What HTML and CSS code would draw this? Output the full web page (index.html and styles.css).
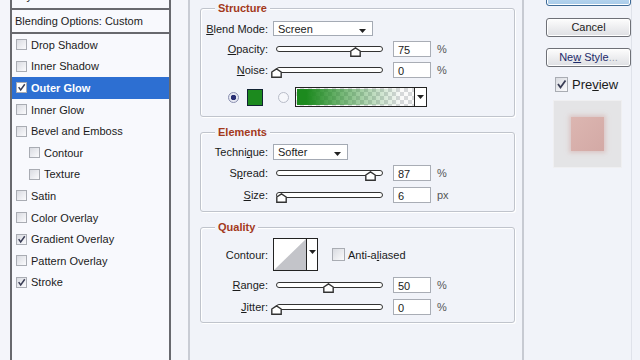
FILE: index.html
```html
<!DOCTYPE html>
<html lang="en">
<head>
    <meta charset="UTF-8">
    <title>Layer Style</title>
    <link rel="stylesheet" href="styles.css">
</head>
<body>
<div class="dialog">

    <div class="sidebar">
        <div class="style-list">
            <div class="list-title">Styles</div>
            <div class="list-head">Blending Options: Custom</div>
            <div class="item"><span class="cb"></span>Drop Shadow</div>
            <div class="item"><span class="cb"></span>Inner Shadow</div>
            <div class="item selected"><span class="cb"><svg viewBox="0 0 11 11"><path d="M2 5 L4.5 8.5 L9.5 1.5"/></svg></span>Outer Glow</div>
            <div class="item"><span class="cb"></span>Inner Glow</div>
            <div class="item"><span class="cb"></span>Bevel and Emboss</div>
            <div class="item sub"><span class="cb"></span>Contour</div>
            <div class="item sub"><span class="cb"></span>Texture</div>
            <div class="item"><span class="cb"></span>Satin</div>
            <div class="item"><span class="cb"></span>Color Overlay</div>
            <div class="item"><span class="cb"><svg viewBox="0 0 11 11"><path d="M2 5 L4.5 8.5 L9.5 1.5"/></svg></span>Gradient Overlay</div>
            <div class="item"><span class="cb"></span>Pattern Overlay</div>
            <div class="item"><span class="cb"><svg viewBox="0 0 11 11"><path d="M2 5 L4.5 8.5 L9.5 1.5"/></svg></span>Stroke</div>
        </div>
    </div>

    <div class="main">
        <!-- Structure -->
        <div class="group g-structure">
            <div class="group-title">Structure</div>
            <div class="row r-blend">
                <span class="label"><u>B</u>lend Mode:</span>
                <div class="select sel-blend">Screen<svg class="arrow" viewBox="0 0 7 4"><path d="M0 0 H7 L3.5 4 Z"/></svg></div>
            </div>
            <div class="row r-gap5">
                <span class="label"><u>O</u>pacity:</span>
                <div class="slider"><div class="track"></div><svg class="thumb" style="left:74%" viewBox="0 0 11 10"><path d="M5.5 0.8 L10.2 4 L10.2 9.2 L0.8 9.2 L0.8 4 Z"/></svg></div>
                <div class="num">75</div><span class="unit">%</span>
            </div>
            <div class="row r-gap5">
                <span class="label"><u>N</u>oise:</span>
                <div class="slider"><div class="track"></div><svg class="thumb" style="left:0%" viewBox="0 0 11 10"><path d="M5.5 0.8 L10.2 4 L10.2 9.2 L0.8 9.2 L0.8 4 Z"/></svg></div>
                <div class="num">0</div><span class="unit">%</span>
            </div>
            <div class="row r-color">
                <span class="radio on"></span>
                <span class="swatch"></span>
                <span class="radio"></span>
                <div class="gradient"><span class="grad-fill"></span><span class="grad-drop"><svg class="arrow" viewBox="0 0 7 4"><path d="M0 0 H7 L3.5 4 Z"/></svg></span></div>
            </div>
        </div>

        <!-- Elements -->
        <div class="group g-elements">
            <div class="group-title">Elements</div>
            <div class="row r-tech">
                <span class="label">Techni<u>q</u>ue:</span>
                <div class="select sel-tech">Softer<svg class="arrow" viewBox="0 0 7 4"><path d="M0 0 H7 L3.5 4 Z"/></svg></div>
            </div>
            <div class="row r-gap5">
                <span class="label">S<u>p</u>read:</span>
                <div class="slider"><div class="track"></div><svg class="thumb" style="left:88%" viewBox="0 0 11 10"><path d="M5.5 0.8 L10.2 4 L10.2 9.2 L0.8 9.2 L0.8 4 Z"/></svg></div>
                <div class="num">87</div><span class="unit">%</span>
            </div>
            <div class="row r-gap6">
                <span class="label"><u>S</u>ize:</span>
                <div class="slider"><div class="track"></div><svg class="thumb" style="left:5.6%" viewBox="0 0 11 10"><path d="M5.5 0.8 L10.2 4 L10.2 9.2 L0.8 9.2 L0.8 4 Z"/></svg></div>
                <div class="num">6</div><span class="unit">px</span>
            </div>
        </div>

        <!-- Quality -->
        <div class="group g-quality">
            <div class="group-title">Quality</div>
            <div class="row r-contour">
                <span class="label">Contour:</span>
                <div class="contour">
                    <svg class="curve" viewBox="0 0 32 31"><path d="M0 31 L32 0 L32 31 Z"/></svg>
                    <span class="contour-drop"><svg class="arrow" viewBox="0 0 7 4"><path d="M0 0 H7 L3.5 4 Z"/></svg></span>
                </div>
                <span class="cb aa"></span><span class="aa-text">Anti-a<u>l</u>iased</span>
            </div>
            <div class="row r-gap6">
                <span class="label"><u>R</u>ange:</span>
                <div class="slider"><div class="track"></div><svg class="thumb" style="left:48.6%" viewBox="0 0 11 10"><path d="M5.5 0.8 L10.2 4 L10.2 9.2 L0.8 9.2 L0.8 4 Z"/></svg></div>
                <div class="num">50</div><span class="unit">%</span>
            </div>
            <div class="row r-gap6">
                <span class="label"><u>J</u>itter:</span>
                <div class="slider"><div class="track"></div><svg class="thumb" style="left:0%" viewBox="0 0 11 10"><path d="M5.5 0.8 L10.2 4 L10.2 9.2 L0.8 9.2 L0.8 4 Z"/></svg></div>
                <div class="num">0</div><span class="unit">%</span>
            </div>
        </div>
    </div>

    <div class="actions">
        <div class="btn btn-ok">OK</div>
        <div class="btn btn-cancel">Cancel</div>
        <div class="btn btn-new">Ne<u>w</u> Style<span class="dots">...</span></div>
        <div class="preview-check">
            <span class="cb big"><svg viewBox="0 0 11 11"><path d="M2 5 L4.5 8.5 L9.5 1.5"/></svg></span>
            <span>Pre<u>v</u>iew</span>
        </div>
        <div class="preview-box"><div class="preview-square"></div></div>
    </div>

</div>
</body>
</html>
```

FILE: styles.css
```css
* {
    box-sizing: border-box;
}

html {
    background: #f1f3f9;
}

body {
    margin: 0;
    width: 640px;
    height: 360px;
    overflow: hidden;
    background: #f1f3f9;
    font-family: "Liberation Sans", Arial, sans-serif;
    font-size: 11px;
    color: #1b1b1b;
}

u {
    text-decoration: underline;
    text-underline-offset: 1px;
}

.dialog {
    display: flex;
    width: 640px;
    height: 360px;
    overflow: hidden;
}

/* ---------- left style list ---------- */
.sidebar {
    width: 190px;
    flex: none;
    padding-left: 10px;
    border-right: 2px solid #c9ccd4;
    background: #f4f5fa;
}

.style-list {
    display: flow-root;
    width: 161px;
    height: 100%;
    border-left: 2px solid #68696e;
    border-right: 2px solid #68696e;
    background: #f8f9fd;
}

.list-title {
    height: 22px;
    margin-top: -12px;
    padding: 2px 4px;
    border-bottom: 2px solid #68696e;
}

.list-head {
    height: 24px;
    line-height: 22px;
    padding-left: 3px;
    border-bottom: 2px solid #68696e;
}

.item {
    height: 21.6px;
    display: flex;
    align-items: center;
    gap: 4px;
    padding-left: 4px;
}

.item.sub {
    padding-left: 17px;
}

.item.selected {
    background: #2d6fd2;
    color: #fff;
    font-weight: bold;
}

.cb {
    width: 11px;
    height: 11px;
    flex: none;
    display: inline-flex;
    border: 1px solid #a9acb3;
    background: linear-gradient(135deg, #d9dbe1, #fbfbfd);
}

.cb svg {
    width: 100%;
    height: 100%;
    fill: none;
    stroke: #3a3d55;
    stroke-width: 1.8;
}

.item.selected .cb {
    background: #fff;
}

/* ---------- main options ---------- */
.main {
    width: 334px;
    flex: none;
    padding-left: 10px;
    border-right: 2px solid #c7cad2;
}

.group {
    width: 315px;
    border: 1px solid #c0c4cc;
    border-radius: 3px;
    box-shadow: inset 1px 1px 0 #fff, 1px 1px 0 #fff;
}

.group-title {
    width: max-content;
    margin: -7px 0 0 14px;
    padding: 0 3px;
    background: #f1f3f9;
    color: #a3391c;
    font-weight: bold;
    line-height: 12px;
}

.g-structure {
    margin-top: 8px;
    padding-bottom: 9px;
}

.g-elements {
    margin-top: 15px;
    padding-bottom: 8px;
}

.g-quality {
    margin-top: 15px;
    padding-bottom: 7px;
}

.row {
    display: flex;
    align-items: center;
    height: 16px;
}

.r-blend {
    margin-top: 7px;
    height: 15px;
}

.r-tech {
    margin-top: 6px;
}

.r-gap5 {
    margin-top: 5px;
}

.r-gap6 {
    margin-top: 6px;
}

.label {
    width: 67px;
    text-align: right;
    flex: none;
}

.select {
    height: 100%;
    margin-left: 5px;
    display: flex;
    align-items: center;
    justify-content: space-between;
    padding: 0 6px 0 4px;
    background: #fff;
    border: 1px solid #a4aab4;
}

.sel-blend {
    width: 100px;
}

.sel-tech {
    width: 75px;
}

.arrow {
    width: 7px;
    height: 4px;
    fill: #222;
    margin-top: 4px;
}

.slider {
    position: relative;
    width: 107px;
    height: 16px;
    margin-left: 8px;
}

.track {
    margin-top: 5px;
    height: 6px;
    border: 1.5px solid #333;
    border-radius: 3px;
    background: #fff;
}

.thumb {
    position: absolute;
    top: 6px;
    width: 11px;
    height: 10px;
    margin-left: -5.5px;
    fill: #fff;
    stroke: #333;
    stroke-width: 1.4;
}

.num {
    width: 38px;
    height: 16px;
    margin-left: 10px;
    padding: 2px 0 0 4px;
    background: #fff;
    border: 1px solid #a9adb5;
}

.unit {
    margin-left: 6px;
    color: #555;
}

/* colour row */
.r-color {
    margin-top: 9px;
    height: 20px;
}

.radio {
    width: 11px;
    height: 11px;
    margin-left: 15px;
    border-radius: 50%;
    border: 1px solid #b8bcc8;
    background: #f6f7fb;
}

.radio.on {
    margin-left: 27px;
    border-color: #8a8fb0;
    background: radial-gradient(circle, #2a2f74 0 2.5px, #e6e8f2 3px);
}

.swatch {
    width: 16px;
    height: 17px;
    margin-left: 8px;
    border: 1px solid #123;
    background: #1c8a1e;
}

.gradient {
    width: 132px;
    height: 20px;
    margin-left: 6px;
    display: flex;
    border: 1px solid #222;
    background: repeating-conic-gradient(#d6d8da 0 25%, #fafafa 0 50%) 0 0 / 8px 8px;
}

.grad-fill {
    flex: 1;
    margin: 1px;
    background: linear-gradient(to right, #1c8a1e 8%, rgba(28, 138, 30, 0.45) 50%, rgba(28, 138, 30, 0) 90%);
}

.grad-drop {
    width: 12px;
    display: flex;
    justify-content: center;
    border-left: 1px solid #222;
    background: #fff;
}

.grad-drop .arrow {
    margin-top: 7px;
}

/* contour row */
.r-contour {
    margin-top: 5px;
    height: 33px;
}

.contour {
    width: 45px;
    height: 33px;
    margin-left: 5px;
    display: flex;
    border: 1px solid #222;
    background: #fff;
}

.curve {
    width: 32px;
    height: 31px;
    fill: #c3c4c9;
}

.contour-drop {
    flex: 1;
    display: flex;
    justify-content: center;
    border-left: 1px solid #222;
}

.contour-drop .arrow {
    margin-top: 11px;
}

.cb.aa {
    width: 13px;
    height: 13px;
    margin-left: 14px;
}

.aa-text {
    margin-left: 3px;
}

/* ---------- right buttons ---------- */
.actions {
    flex: 1;
    padding-left: 22px;
    border-right: 1px solid #dfe2ea;
    margin-right: 9px;
}

.btn {
    width: 85px;
    height: 19px;
    line-height: 17px;
    text-align: center;
    border: 1px solid #6e7077;
    border-radius: 3px;
    background: linear-gradient(#fdfdfd, #dedfe3);
    box-shadow: inset 0 0 0 1px #fff;
}

.btn-ok {
    height: 20px;
    margin-top: -14px;
    border-color: #3d6996;
    background: linear-gradient(#d3e6f7, #a8cbe9);
}

.btn-cancel {
    margin-top: 12px;
}

.btn-new {
    margin-top: 11px;
    color: #1d2a6a;
}

.dots {
    color: #9a9eb0;
}

.preview-check {
    margin-top: 10px;
    padding-left: 9px;
    height: 15px;
    display: flex;
    align-items: center;
    gap: 4px;
    font-size: 13px;
}

.cb.big {
    width: 13px;
    height: 15px;
}

.preview-box {
    width: 69px;
    height: 68px;
    margin: 8px 0 0 7px;
    display: flex;
    align-items: center;
    justify-content: center;
    background: #e4e4e6;
    border: 1px solid #efeff1;
}

.preview-square {
    width: 33px;
    height: 34px;
    background: linear-gradient(135deg, #dcb6b1, #d3a9a5);
    box-shadow: 0 0 4px 2px rgba(215, 180, 176, 0.6);
}
```
